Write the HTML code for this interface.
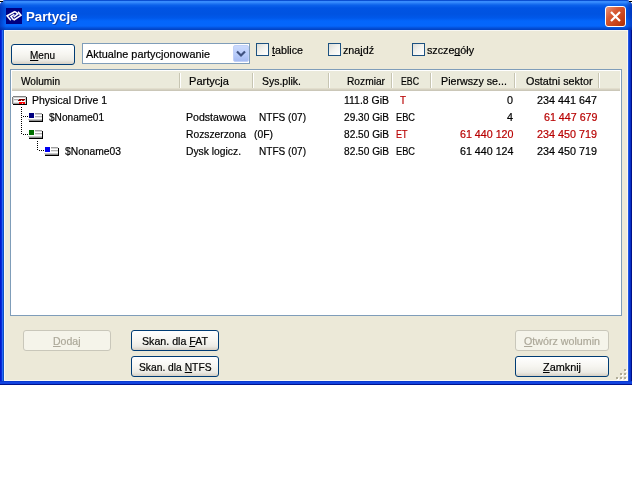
<!DOCTYPE html>
<html><head><meta charset="utf-8">
<style>
html,body{margin:0;padding:0;background:#fff;}
body{width:640px;height:480px;overflow:hidden;position:relative;font-family:"Liberation Sans","DejaVu Sans",sans-serif;font-size:11px;color:#000;}
.abs{position:absolute;}
#win{will-change:transform;position:absolute;left:0;top:0;width:632px;height:385px;background:linear-gradient(to right,#0019cf 0,#0019cf 1px,#0a2cd6 1px,#0a2cd6 2px,#2468f8 2px,#2468f8 3px,#0e50c4 3px,#0e50c4 4px,#0831d9 4px,#0831d9 628px,#2458e4 628px,#2458e4 629px,#0a3cd4 629px,#0a3cd4 630px,#0830c8 630px,#0830c8 631px,#001088 631px);border-radius:6px 6px 0 0;overflow:hidden;}
#title{position:absolute;left:0;top:0;width:632px;height:30px;
background:linear-gradient(to bottom,#0a4fd2 0,#0a4fd2 1px,#3a8eff 1px,#3388fb 2.5px,#1a70f0 4px,#0a60ea 5.5px,#0054e3 8px,#0053e1 14px,#0058ea 18px,#0366fb 21px,#0566fb 26px,#0450d8 28px,#0040c0 30px);}
#title:before{content:"";position:absolute;left:0;top:0;width:6px;height:30px;background:linear-gradient(to right,rgba(0,30,160,.55),rgba(0,30,160,0));}
#title:after{content:"";position:absolute;right:0;top:0;width:6px;height:30px;background:linear-gradient(to left,rgba(0,30,160,.55),rgba(0,30,160,0));}
#body{position:absolute;left:4px;top:30px;width:624px;height:351px;background:#ece9d8;box-sizing:border-box;border:1px solid #f8f7f2;}
#bot{position:absolute;left:0;top:381px;width:632px;height:4px;background:linear-gradient(to bottom,#0a3ad0 0,#0a3ad0 1px,#1448e4 1px,#1040dc 3px,#00138c 3px);}
.btn{position:absolute;box-sizing:border-box;height:21px;border:1px solid #003c74;border-radius:3px;background:linear-gradient(to bottom,#fff 0%,#f6f5f0 50%,#ecebe5 80%,#d6d0c5 100%);}
.btn.dis{border-color:#c9c7ba;background:#f5f4ea;}
.btn.def{box-shadow:inset 0 0 0 2px #b4c8f0;}
u{text-decoration:underline;text-underline-offset:1px;text-decoration-skip-ink:none;text-decoration-thickness:1px;}
.cb{position:absolute;box-sizing:border-box;width:13px;height:13px;border:1px solid #1c5180;background:linear-gradient(135deg,#dcdcd7 0%,#f3f3ef 50%,#fff 100%);}
.t{position:absolute;white-space:nowrap;transform-origin:0 0;-webkit-text-stroke:0.2px;}
#lv{position:absolute;left:10px;top:69px;width:612px;height:247px;box-sizing:border-box;border:1px solid #7f9db9;background:#fff;}
#hdr{position:absolute;left:1px;top:1px;width:608px;height:20px;background:linear-gradient(to bottom,#ebeadb 0,#ebeadb 17px,#e2decd 17px,#e2decd 18px,#d6d2c2 18px,#d6d2c2 19px,#cbc7b8 19px);}
.sep{position:absolute;top:3px;width:1px;height:15px;background:#c7c5b2;box-shadow:1px 0 0 #fff;}
svg{position:absolute;shape-rendering:crispEdges;}
</style></head><body>
<div id="win">
<div id="title"></div>
<svg style="left:6px;top:8px" width="16" height="16" viewBox="0 0 16 16"><rect width="16" height="16" fill="#000080"/><g shape-rendering="geometricPrecision" fill="none" stroke="#fff" stroke-width="1.6" stroke-linejoin="miter"><path d="M9 3.5 L1 7.8 L4.8 12.2"/><path d="M8.4 6.4 L4.9 8.4 L7.8 12"/><path d="M12 3.8 L15 7.3 L7.8 12"/><path d="M9 3.5 L11.9 6 L7.6 9.2"/></g></svg>
<div class="abs" style="left:605px;top:6px;width:21px;height:21px;box-sizing:border-box;border:1px solid #fff;border-radius:3px;background:linear-gradient(135deg,#e8967c 0%,#d85a34 35%,#c43e14 75%,#a83008 100%);">
<svg width="19" height="19" viewBox="0 0 19 19" style="left:0;top:0;shape-rendering:geometricPrecision"><path d="M5 5 L14 14 M14 5 L5 14" stroke="#fff" stroke-width="2.2" fill="none"/></svg></div>
<div id="body"></div><div id="bot"></div>

<div class="btn" style="left:11px;top:44px;width:64px;"></div>
<div class="abs" style="left:82px;top:43px;width:168px;height:21px;box-sizing:border-box;border:1px solid #7f9db9;background:#fff;">
 <div class="abs" style="left:150px;top:1px;width:16px;height:17px;border-radius:2px;background:linear-gradient(to bottom,#cbdafd,#b9cdfb 55%,#a5bbf2);box-sizing:border-box;border:1px solid #c0d0f8;">
 <svg width="14" height="15" viewBox="0 0 14 15" style="left:0;top:0;shape-rendering:geometricPrecision"><path d="M3 5.5 L7 9.5 L11 5.5" stroke="#3f5280" stroke-width="2.2" fill="none"/></svg></div>
</div>
<div class="cb" style="left:256px;top:43px;"></div>
<div class="cb" style="left:328px;top:43px;"></div>
<div class="cb" style="left:412px;top:43px;"></div>

<div id="lv">
 <div id="hdr"></div>
 <div class="sep" style="left:168px"></div>
 <div class="sep" style="left:241px"></div>
 <div class="sep" style="left:317px"></div>
 <div class="sep" style="left:380px"></div>
 <div class="sep" style="left:419px"></div>
 <div class="sep" style="left:503px"></div>
 <div class="sep" style="left:587px"></div>
</div>

<!-- tree lines -->
<svg style="left:0;top:0" width="70" height="170" viewBox="0 0 70 170">
 <g stroke="#000" stroke-width="1" stroke-dasharray="1 1" fill="none">
  <path d="M21.5 107 V135"/><path d="M23 116.5 H28"/><path d="M23 134.5 H28"/>
  <path d="M37.5 141 V151"/><path d="M39 150.5 H44"/>
 </g>
 <!-- physical drive icon -->
 <g>
  <rect x="13" y="96" width="13" height="1" fill="#808080"/>
  <rect x="12" y="97" width="1" height="7" fill="#808080"/>
  <rect x="13" y="97" width="13" height="7" fill="#d0d0d0"/>
  <rect x="14" y="98" width="11" height="1" fill="#fff"/>
  <rect x="14" y="99" width="5" height="1" fill="#b0b0b0"/>
  <rect x="14" y="100" width="5" height="1" fill="#e8e8e8"/>
  <rect x="14" y="101" width="11" height="1" fill="#fff"/>
  <rect x="14" y="102" width="5" height="1" fill="#e0e0e0"/>
  <rect x="13" y="103" width="6" height="1" fill="#a0a0a0"/>
  <rect x="19" y="99" width="6" height="1" fill="#800000"/>
  <rect x="18" y="100" width="3" height="1" fill="#800000"/><rect x="22" y="100" width="2" height="1" fill="#a00000"/>
  <rect x="19" y="102" width="6" height="1" fill="#ff0000"/>
  <rect x="19" y="103" width="3" height="1" fill="#ff0000"/><rect x="23" y="103" width="2" height="1" fill="#ff0000"/>
  <rect x="26" y="97" width="1" height="7" fill="#101010"/>
  <rect x="13" y="104" width="14" height="1" fill="#000"/>
 </g>
 <!-- partition icons -->
<g>
  <rect x="28" y="113" width="14" height="8" fill="#fff"/>
  <rect x="35" y="113" width="7" height="1" fill="#a0a0a0"/>
  <rect x="35" y="114" width="7" height="1" fill="#d4d4d4"/>
  <rect x="35" y="116" width="7" height="1" fill="#b0b0b0"/>
  <rect x="35" y="117" width="7" height="1" fill="#e8e8e8"/>
  <rect x="28" y="119" width="14" height="1" fill="#c8c8c8"/>
  <rect x="29" y="120" width="13" height="1" fill="#909090"/>
  <rect x="29" y="113" width="5" height="5" fill="#000080"/>
  <rect x="42" y="114" width="1" height="8" fill="#000"/>
  <rect x="29" y="121" width="14" height="1" fill="#000"/>
 </g>
<g>
  <rect x="28" y="130" width="14" height="8" fill="#fff"/>
  <rect x="35" y="130" width="7" height="1" fill="#a0a0a0"/>
  <rect x="35" y="131" width="7" height="1" fill="#d4d4d4"/>
  <rect x="35" y="133" width="7" height="1" fill="#b0b0b0"/>
  <rect x="35" y="134" width="7" height="1" fill="#e8e8e8"/>
  <rect x="28" y="136" width="14" height="1" fill="#c8c8c8"/>
  <rect x="29" y="137" width="13" height="1" fill="#909090"/>
  <rect x="29" y="130" width="5" height="5" fill="#007000"/>
  <rect x="42" y="131" width="1" height="8" fill="#000"/>
  <rect x="29" y="138" width="14" height="1" fill="#000"/>
 </g>
<g>
  <rect x="44" y="147" width="14" height="8" fill="#fff"/>
  <rect x="51" y="147" width="7" height="1" fill="#a0a0a0"/>
  <rect x="51" y="148" width="7" height="1" fill="#d4d4d4"/>
  <rect x="51" y="150" width="7" height="1" fill="#b0b0b0"/>
  <rect x="51" y="151" width="7" height="1" fill="#e8e8e8"/>
  <rect x="44" y="153" width="14" height="1" fill="#c8c8c8"/>
  <rect x="45" y="154" width="13" height="1" fill="#909090"/>
  <rect x="45" y="147" width="5" height="5" fill="#0000f0"/>
  <rect x="58" y="148" width="1" height="8" fill="#000"/>
  <rect x="45" y="155" width="14" height="1" fill="#000"/>
 </g>
</svg>

<div class="btn dis" style="left:23px;top:330px;width:88px;"></div>
<div class="btn" style="left:131px;top:330px;width:88px;"></div>
<div class="btn" style="left:131px;top:356px;width:88px;"></div>
<div class="btn dis" style="left:515px;top:330px;width:94px;"></div>
<div class="btn" style="left:515px;top:356px;width:94px;"></div>
<!-- size grip -->
<svg style="left:614px;top:367px" width="14" height="14" viewBox="614 367 14 14">
 <g fill="#fff"><rect x="625" y="370" width="2" height="2"/><rect x="621" y="374" width="2" height="2"/><rect x="625" y="374" width="2" height="2"/><rect x="617" y="378" width="2" height="2"/><rect x="621" y="378" width="2" height="2"/><rect x="625" y="378" width="2" height="2"/></g>
 <g fill="#b0ac98"><rect x="624" y="369" width="2" height="2"/><rect x="620" y="373" width="2" height="2"/><rect x="624" y="373" width="2" height="2"/><rect x="616" y="377" width="2" height="2"/><rect x="620" y="377" width="2" height="2"/><rect x="624" y="377" width="2" height="2"/></g>
</svg>

<div class="t" style="left:26.00px;top:9.89px;font-size:13.6px;line-height:13.6px;color:#fff;transform:scaleX(0.9734);font-weight:bold;text-shadow:1px 1px 0 #0f3ba8;-webkit-text-stroke:0;">Partycje</div>
<div class="t" style="left:30.00px;top:49.69px;font-size:11px;line-height:11px;color:#000;transform:scaleX(0.9081);"><u>M</u>enu</div>
<div class="t" style="left:86.00px;top:48.69px;font-size:11px;line-height:11px;color:#000;transform:scaleX(0.9892);">Aktualne partycjonowanie</div>
<div class="t" style="left:272.00px;top:44.69px;font-size:11px;line-height:11px;color:#000;transform:scaleX(0.9749);"><u>t</u>ablice</div>
<div class="t" style="left:343.00px;top:44.69px;font-size:11px;line-height:11px;color:#000;transform:scaleX(0.9749);">zna<u>j</u>dź</div>
<div class="t" style="left:427.00px;top:44.69px;font-size:11px;line-height:11px;color:#000;transform:scaleX(0.9731);">szcze<u>g</u>óły</div>
<div class="t" style="left:21.00px;top:75.69px;font-size:11px;line-height:11px;color:#000;transform:scaleX(0.9156);">Wolumin</div>
<div class="t" style="left:189.00px;top:75.69px;font-size:11px;line-height:11px;color:#000;transform:scaleX(1.0063);">Partycja</div>
<div class="t" style="left:262.00px;top:75.69px;font-size:11px;line-height:11px;color:#000;transform:scaleX(0.9519);">Sys.plik.</div>
<div class="t" style="left:347.00px;top:75.69px;font-size:11px;line-height:11px;color:#000;transform:scaleX(0.9279);">Rozmiar</div>
<div class="t" style="left:401.00px;top:75.69px;font-size:11px;line-height:11px;color:#000;transform:scaleX(0.7956);">EBC</div>
<div class="t" style="left:441.00px;top:75.69px;font-size:11px;line-height:11px;color:#000;transform:scaleX(0.9726);">Pierwszy se...</div>
<div class="t" style="left:526.00px;top:75.69px;font-size:11px;line-height:11px;color:#000;transform:scaleX(0.9800);">Ostatni sektor</div>
<div class="t" style="left:32.00px;top:94.69px;font-size:11px;line-height:11px;color:#000;transform:scaleX(0.9511);">Physical Drive 1</div>
<div class="t" style="left:344.00px;top:94.69px;font-size:11px;line-height:11px;color:#000;transform:scaleX(0.9514);">111.8 GiB</div>
<div class="t" style="left:400.00px;top:94.69px;font-size:11px;line-height:11px;color:#b80000;transform:scaleX(0.8910);">T</div>
<div class="t" style="left:507.00px;top:94.69px;font-size:11px;line-height:11px;color:#000;transform:scaleX(0.9796);">0</div>
<div class="t" style="left:537.00px;top:94.69px;font-size:11px;line-height:11px;color:#000;transform:scaleX(0.9808);">234 441 647</div>
<div class="t" style="left:49.00px;top:111.69px;font-size:11px;line-height:11px;color:#000;transform:scaleX(0.9176);">$Noname01</div>
<div class="t" style="left:186.00px;top:111.69px;font-size:11px;line-height:11px;color:#000;transform:scaleX(0.9619);">Podstawowa</div>
<div class="t" style="left:259.00px;top:111.69px;font-size:11px;line-height:11px;color:#000;transform:scaleX(0.9154);">NTFS (07)</div>
<div class="t" style="left:344.00px;top:111.69px;font-size:11px;line-height:11px;color:#000;transform:scaleX(0.9198);">29.30 GiB</div>
<div class="t" style="left:396.00px;top:111.69px;font-size:11px;line-height:11px;color:#000;transform:scaleX(0.8398);">EBC</div>
<div class="t" style="left:507.00px;top:111.69px;font-size:11px;line-height:11px;color:#000;transform:scaleX(0.9796);">4</div>
<div class="t" style="left:543.50px;top:111.69px;font-size:11px;line-height:11px;color:#b80000;transform:scaleX(0.9716);">61 447 679</div>
<div class="t" style="left:186.00px;top:128.69px;font-size:11px;line-height:11px;color:#000;transform:scaleX(0.9345);">Rozszerzona</div>
<div class="t" style="left:254.00px;top:128.69px;font-size:11px;line-height:11px;color:#000;transform:scaleX(0.9419);">(0F)</div>
<div class="t" style="left:344.00px;top:128.69px;font-size:11px;line-height:11px;color:#000;transform:scaleX(0.9198);">82.50 GiB</div>
<div class="t" style="left:396.00px;top:128.69px;font-size:11px;line-height:11px;color:#b80000;transform:scaleX(0.8178);">ET</div>
<div class="t" style="left:459.50px;top:128.69px;font-size:11px;line-height:11px;color:#b80000;transform:scaleX(0.9716);">61 440 120</div>
<div class="t" style="left:537.00px;top:128.69px;font-size:11px;line-height:11px;color:#b80000;transform:scaleX(0.9808);">234 450 719</div>
<div class="t" style="left:65.00px;top:145.69px;font-size:11px;line-height:11px;color:#000;transform:scaleX(0.9343);">$Noname03</div>
<div class="t" style="left:186.00px;top:145.69px;font-size:11px;line-height:11px;color:#000;transform:scaleX(0.9372);">Dysk logicz.</div>
<div class="t" style="left:259.00px;top:145.69px;font-size:11px;line-height:11px;color:#000;transform:scaleX(0.9154);">NTFS (07)</div>
<div class="t" style="left:344.00px;top:145.69px;font-size:11px;line-height:11px;color:#000;transform:scaleX(0.9198);">82.50 GiB</div>
<div class="t" style="left:396.00px;top:145.69px;font-size:11px;line-height:11px;color:#000;transform:scaleX(0.8398);">EBC</div>
<div class="t" style="left:459.50px;top:145.69px;font-size:11px;line-height:11px;color:#000;transform:scaleX(0.9716);">61 440 124</div>
<div class="t" style="left:537.00px;top:145.69px;font-size:11px;line-height:11px;color:#000;transform:scaleX(0.9808);">234 450 719</div>
<div class="t" style="left:53.00px;top:335.69px;font-size:11px;line-height:11px;color:#aca899;transform:scaleX(0.9565);"><u>D</u>odaj</div>
<div class="t" style="left:141.50px;top:335.69px;font-size:11px;line-height:11px;color:#000;transform:scaleX(0.9666);">Skan. dla <u>F</u>AT</div>
<div class="t" style="left:138.50px;top:361.69px;font-size:11px;line-height:11px;color:#000;transform:scaleX(0.9338);">Skan. dla <u>N</u>TFS</div>
<div class="t" style="left:524.00px;top:335.69px;font-size:11px;line-height:11px;color:#aca899;transform:scaleX(0.9712);"><u>O</u>twórz wolumin</div>
<div class="t" style="left:543.00px;top:361.69px;font-size:11px;line-height:11px;color:#000;transform:scaleX(0.9866);"><u>Z</u>amknij</div>

</div>
<div class="abs" style="left:0;top:1px;width:3px;height:1px;background:#000;"></div><div class="abs" style="left:629px;top:1px;width:3px;height:1px;background:#000;"></div>
</body></html>
